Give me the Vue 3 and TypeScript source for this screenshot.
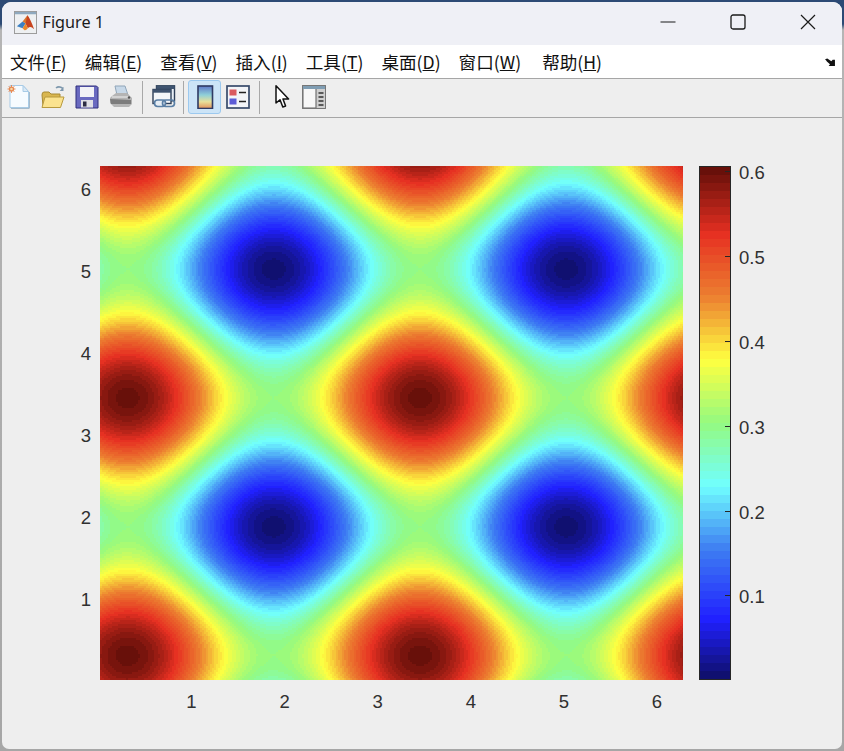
<script setup lang="ts">
import { onMounted, ref } from 'vue'

const stops: [number, number[]][] = [
  [0, [16, 16, 112]],
  [0.11, [32, 32, 255]],
  [0.25, [62, 126, 242]],
  [0.375, [112, 255, 255]],
  [0.5, [148, 250, 128]],
  [0.625, [255, 255, 64]],
  [0.75, [236, 128, 48]],
  [0.875, [230, 48, 34]],
  [1, [104, 16, 10]],
]

function colorAt(t: number): number[] {
  for (let i = 1; i < stops.length; i++) {
    if (t <= stops[i][0]) {
      const [a, ca] = stops[i - 1]
      const [b, cb] = stops[i]
      const k = (t - a) / (b - a)
      return ca.map((c, j) => Math.round(c + (cb[j] - c) * k))
    }
  }
  return stops[stops.length - 1][1]
}

const LEVELS = 64
const palette = Array.from({ length: LEVELS }, (_, i) => colorAt(i / (LEVELS - 1)))
const bands = palette.map((c) => `rgb(${c[0]},${c[1]},${c[2]})`).reverse()

const menus = [
  { name: '文件', key: 'F' },
  { name: '编辑', key: 'E' },
  { name: '查看', key: 'V' },
  { name: '插入', key: 'I' },
  { name: '工具', key: 'T' },
  { name: '桌面', key: 'D' },
  { name: '窗口', key: 'W' },
  { name: '帮助', key: 'H' },
]

const xTicks = [1, 2, 3, 4, 5, 6].map((v) => ({ v, left: -1.6 + 93.1 * v }))
const yTicks = [1, 2, 3, 4, 5, 6].map((v) => ({ v, top: 516 - 82 * v }))
const cTicks = [0.1, 0.2, 0.3, 0.4, 0.5, 0.6].map((v, i) => ({
  label: v.toFixed(1),
  top: 429.3 - 84.8 * i,
}))

const plot = ref<HTMLCanvasElement | null>(null)

onMounted(() => {
  const canvas = plot.value
  if (!canvas) return
  const ctx = canvas.getContext('2d')
  if (!ctx) return
  const W = canvas.width
  const H = canvas.height
  const img = ctx.createImageData(W, H)
  const cell = 2
  for (let j = 0; j < H; j++) {
    const py = (Math.floor((j - 2) / cell) + 0.5) * cell
    for (let i = 0; i < W; i++) {
      const px = (Math.floor((i - 2) / cell) + 0.5) * cell
      const u = ((px - 27.5) / 93.1) * 2
      const v = ((py - 232) / 82) * 2
      const t = 0.5 + 0.25 * (Math.cos(u) + Math.cos(v))
      const c = palette[Math.min(LEVELS - 1, Math.round(t * (LEVELS - 1)))]
      const o = (j * W + i) * 4
      img.data[o] = c[0]
      img.data[o + 1] = c[1]
      img.data[o + 2] = c[2]
      img.data[o + 3] = 255
    }
  }
  ctx.putImageData(img, 0, 0)
})
</script>

<template>
  <div class="stage">
    <div class="window">
      <header class="titlebar">
        <svg class="app-icon" viewBox="0 0 24 24" width="23" height="23">
          <rect x="0.5" y="0.5" width="23" height="23" fill="#eef0f2" stroke="#9a9a9a" />
          <rect x="1" y="1" width="22" height="2.4" fill="#8fa9bf" />
          <path d="M3 16 L9 11 L12 13 L9 18 Z" fill="#3b7fc4" />
          <path d="M9 11 L14 4.5 L16 8 L12 13 Z" fill="#d9762b" />
          <path d="M14 4.5 Q17 8 21 19 Q17 15 14.5 18 L12 13 Z" fill="#c8431f" />
          <path d="M9 18 L12 13 L14.5 18 Q12.5 20.5 11 20 Z" fill="#e8892c" />
        </svg>
        <span class="title">Figure 1</span>
        <div class="controls">
          <svg viewBox="0 0 16 16" width="16" height="16" class="ctl"><path d="M0.5 8 H15.5" stroke="#1a1a1a" stroke-width="1.2" /></svg>
          <svg viewBox="0 0 16 16" width="16" height="16" class="ctl"><rect x="1" y="1" width="14" height="14" rx="2" fill="none" stroke="#1a1a1a" stroke-width="1.3" /></svg>
          <svg viewBox="0 0 16 16" width="16" height="16" class="ctl"><path d="M1 1 L15 15 M15 1 L1 15" stroke="#1a1a1a" stroke-width="1.2" /></svg>
        </div>
      </header>

      <nav class="menubar">
        <span v-for="m in menus" :key="m.key" class="menu">{{ m.name }}(<u>{{ m.key }}</u>)</span>
        <svg class="dock" viewBox="0 0 12 10" width="12" height="9">
          <path d="M0.5 1.5 L3 0.5 L7.5 3.5 L9 2 L11.5 2 L11.5 9 L4.5 9 L6 7 L2.5 4 L2 3 Z" fill="#111" />
        </svg>
      </nav>

      <div class="toolbar">
        <button class="tool">
          <svg viewBox="0 0 24 24" width="24" height="24">
            <path d="M4 1.5 H16.5 L22.5 7.5 V23.5 H4 Z" fill="#5f87a8" />
            <path d="M3 0.5 H16 L21.5 6.5 V22.5 H3 Z" fill="#f6fbff" stroke="#a8cbe6" />
            <path d="M16 0.5 V6.5 H21.5 Z" fill="#dbe9f5" stroke="#a8cbe6" />
            <circle cx="4.5" cy="4" r="2.6" fill="#e58c52" />
            <path d="M4.5 0 V8 M0.5 4 H8.5 M1.7 1.2 L7.3 6.8 M7.3 1.2 L1.7 6.8" stroke="#e8814a" stroke-width="0.9" />
            <circle cx="4.5" cy="4" r="1.3" fill="#f9d8a8" />
          </svg>
        </button>
        <button class="tool">
          <svg viewBox="0 0 24 24" width="24" height="24">
            <path d="M15 3 Q18 0.5 22 3.5" fill="none" stroke="#7e98ad" stroke-width="1.6" />
            <path d="M22.5 2 V6 H18.6 Z" fill="#7e98ad" />
            <path d="M1 10 Q1 7 3 7 H8 L10 9 H19 V21 H2 Z" fill="#d9b64f" stroke="#a88a34" />
            <path d="M1 22.5 L4 12 H23 L19.5 22.5 Z" fill="#fbe38f" stroke="#b89a3e" />
          </svg>
        </button>
        <button class="tool">
          <svg viewBox="0 0 24 24" width="24" height="24">
            <path d="M1 1 H21.5 L23 2.5 V23 H1 Z" fill="#6a6ac0" stroke="#2f2f7d" />
            <rect x="5" y="2" width="14" height="10" fill="#f2f2f6" />
            <rect x="6" y="15" width="12" height="7.5" fill="#dfdfe6" />
            <rect x="8" y="16.5" width="3.5" height="5" fill="#2c2c44" />
          </svg>
        </button>
        <button class="tool">
          <svg viewBox="0 0 24 24" width="24" height="24">
            <path d="M6 1 H16 L19 10 H8 Z" fill="#c7d8e8" stroke="#90a5b8" />
            <path d="M3 11 L7 8 H18 L23 13 V19 L20 22 H5 L1 18 V13 Z" fill="#b4b4b4" />
            <path d="M1 14 L22 15 V19 H2 Z" fill="#7c7c7c" />
            <path d="M3 12 H20" stroke="#dddddd" stroke-width="1.6" />
            <circle cx="20" cy="12.5" r="1.2" fill="#555" />
          </svg>
        </button>
        <i class="sep"></i>
        <button class="tool wide-link">
          <svg viewBox="0 0 24 24" width="24" height="24">
            <rect x="4.5" y="0.8" width="18" height="15" fill="#e8eef5" stroke="#2e3f58" stroke-width="1.4" />
            <rect x="4.5" y="0.8" width="18" height="3.2" fill="#3f5470" />
            <rect x="1" y="4.5" width="18" height="14" fill="#f4f7fa" stroke="#2e3f58" stroke-width="1.4" />
            <rect x="1" y="4.5" width="18" height="3.2" fill="#3f5470" />
            <rect x="2.5" y="15" width="11" height="6.5" rx="3.2" fill="#e6edf4" stroke="#5a7fa5" stroke-width="1.7" />
            <rect x="10.5" y="15" width="12" height="6.5" rx="3.2" fill="none" stroke="#5a7fa5" stroke-width="1.7" />
          </svg>
        </button>
        <i class="sep"></i>
        <button class="tool active">
          <svg viewBox="0 0 24 24" width="24" height="24">
            <defs>
              <linearGradient id="cbar" x1="0" y1="0" x2="0" y2="1">
                <stop offset="0" stop-color="#5f78c8" />
                <stop offset="0.4" stop-color="#8fd0d8" />
                <stop offset="0.7" stop-color="#e8e09a" />
                <stop offset="1" stop-color="#e0905a" />
              </linearGradient>
            </defs>
            <rect x="5" y="1" width="14.5" height="22.5" fill="url(#cbar)" stroke="#2f3a63" stroke-width="1.6" />
          </svg>
        </button>
        <button class="tool">
          <svg viewBox="0 0 24 24" width="24" height="24">
            <rect x="1" y="1" width="22" height="22" fill="#f2f4f8" stroke="#384a6b" stroke-width="1.7" />
            <rect x="3.5" y="4.5" width="7" height="6" fill="#d9595f" />
            <rect x="3.5" y="13.5" width="7" height="6" fill="#5b5bd6" />
            <path d="M13 7.5 H20 M13 16.5 H20" stroke="#222" stroke-width="1.6" />
          </svg>
        </button>
        <i class="sep"></i>
        <button class="tool pointer">
          <svg viewBox="0 0 24 24" width="24" height="24">
            <path d="M6 0.8 V18 L10 14.8 L12.8 22 L15.6 21 L13 14 L18.6 14 Z" fill="#ffffff" stroke="#111" stroke-width="1.5" stroke-linejoin="round" />
          </svg>
        </button>
        <button class="tool">
          <svg viewBox="0 0 24 24" width="24" height="24">
            <rect x="0.8" y="0.8" width="22.4" height="22.4" fill="#f7f7f7" stroke="#707070" stroke-width="1.5" />
            <rect x="1" y="1" width="22" height="3" fill="#7f9db3" />
            <rect x="14" y="4" width="9" height="19" fill="#cfcfcf" />
            <path d="M14 4 V23" stroke="#707070" stroke-width="1.2" />
            <path d="M16.5 8 H21.5 M16.5 12 H21.5 M16.5 16 H21.5 M16.5 20 H21.5" stroke="#333" stroke-width="1.6" />
          </svg>
        </button>
      </div>

      <main class="figure">
        <div class="axes">
          <div class="heat-clip">
            <canvas ref="plot" class="heat" width="587" height="518"></canvas>
          </div>
          <span v-for="t in yTicks" :key="t.v" class="tick ytick" :style="{ top: t.top + 'px' }">{{ t.v }}</span>
          <span v-for="t in xTicks" :key="t.v" class="tick xtick" :style="{ left: t.left + 'px' }">{{ t.v }}</span>
        </div>
        <div class="colorbar">
          <div class="bands">
            <i v-for="(b, i) in bands" :key="i" class="band" :style="{ background: b }"></i>
          </div>
          <template v-for="t in cTicks" :key="t.label">
            <i class="cmark" :style="{ top: t.top + 'px' }"></i>
            <span class="tick clabel" :style="{ top: t.top + 2 + 'px' }">{{ t.label }}</span>
          </template>
        </div>
      </main>
    </div>
  </div>
</template>

<style scoped>
.stage {
  width: 844px;
  height: 751px;
  box-sizing: border-box;
  padding: 2px 2px 2px 2px;
  background: linear-gradient(180deg, #2c4a75 0, #2c4a75 24px, #b5b5b5 30px, #a6a6a6 100%);
}
.window {
  height: 100%;
  display: flex;
  flex-direction: column;
  border-radius: 9px 9px 7px 7px;
  overflow: hidden;
  background: #eeeeee;
}
.titlebar {
  height: 43px;
  flex: none;
  background: #eff0f6;
  display: flex;
  align-items: center;
  padding: 0 0 3px 12px;
  box-sizing: border-box;
}
.app-icon {
  flex: none;
}
.title {
  margin-left: 5.5px;
  font: 16.2px "Noto Sans", "Open Sans", sans-serif;
  color: #1a1a1a;
}
.controls {
  margin-left: auto;
  display: flex;
  gap: 54px;
  padding-right: 26px;
  align-items: center;
}
.ctl {
  display: block;
}
.menubar {
  height: 34px;
  flex: none;
  box-sizing: border-box;
  background: #ffffff;
  display: flex;
  align-items: center;
  gap: 18px;
  padding: 0 6px 0 8px;
  border-bottom: 1px solid #a6a6a6;
  font: 17.6px "Noto Sans CJK SC", "Noto Sans", sans-serif;
  color: #111;
}
.menu {
  white-space: nowrap;
}
.menu:nth-child(7) {
  margin-right: 3px;
}
.dock {
  margin-left: auto;
  margin-top: 2px;
  flex: none;
}
.toolbar {
  height: 39px;
  flex: none;
  box-sizing: border-box;
  display: flex;
  align-items: center;
  background: #eeeeee;
  border-bottom: 1px solid #a6a6a6;
  padding: 0 0 2px 5px;
}
.tool {
  width: 24px;
  height: 24px;
  padding: 0;
  border: 0;
  background: none;
  margin-right: 10px;
  flex: none;
  display: flex;
  align-items: center;
  justify-content: center;
}
.tool svg {
  display: block;
  flex: none;
}
.tool.active {
  width: 33px;
  height: 34px;
  box-sizing: border-box;
  background: #cce4f7;
  border: 1px solid #9cc9ef;
  border-radius: 3px;
  margin-right: 5px;
}
.tool.pointer {
  margin-left: 1px;
  margin-right: 8.5px;
}
.wide-link {
  margin-right: 9px;
}
.sep {
  width: 1px;
  height: 33px;
  background: #a8a8a8;
  flex: none;
  margin: 0 9px 0 -1.5px;
}
.sep + .tool.active {
  margin-left: -5px;
}
.figure {
  flex: 1;
  display: flex;
  align-items: flex-start;
  gap: 16px;
  padding: 48px 0 0 98px;
}
.axes {
  position: relative;
  width: 583px;
  height: 514px;
  flex: none;
}
.heat-clip {
  width: 583px;
  height: 514px;
  overflow: hidden;
}
.heat {
  display: block;
  width: 587px;
  height: 518px;
  margin: -2px 0 0 -2px;
  filter: blur(0.7px);
}
.tick {
  position: absolute;
  font: 18.5px "Liberation Sans", Arial, sans-serif;
  color: #303030;
  line-height: 20px;
  white-space: nowrap;
}
.ytick {
  right: 592px;
  margin-top: -10px;
}
.xtick {
  top: 526px;
  transform: translateX(-50%);
}
.colorbar {
  position: relative;
  width: 32px;
  height: 514px;
  flex: none;
}
.bands {
  height: 100%;
  box-sizing: border-box;
  border: 1px solid #262626;
  display: flex;
  flex-direction: column;
}
.band {
  flex: 1;
  display: block;
}
.cmark {
  position: absolute;
  right: 1px;
  width: 5px;
  height: 1px;
  background: #262626;
}
.clabel {
  left: 40px;
  margin-top: -10px;
}
</style>
